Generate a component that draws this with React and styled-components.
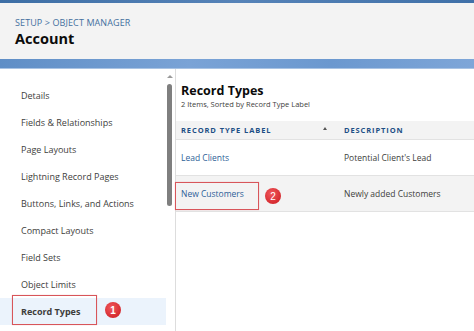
import styled, { createGlobalStyle } from 'styled-components';

const GlobalStyle = createGlobalStyle`
    body {
        margin: 0;
        background: #ffffff;
        font-family: 'Open Sans', 'Noto Sans', sans-serif;
    }
`;

const Page = styled.div`
    width: 474px;
    height: 331px;
    overflow: hidden;
    display: flex;
    flex-direction: column;
    background: #ffffff;
`;

const TopStrip = styled.div`
    height: 3px;
    background: linear-gradient(90deg, #3d6ea5, #5683b8 50%, #3f70a8);
`;

const Header = styled.div`
    height: 56px;
    box-sizing: border-box;
    padding: 13px 15px 0;
    background: #f3f3f3;
`;

const Breadcrumb = styled.div`
    font-size: 9px;
    color: #44709f;
    letter-spacing: 0.1px;
    line-height: 14px;
`;

const Title = styled.div`
    font-size: 14.5px;
    font-weight: 700;
    color: #0b0b0b;
    line-height: 20px;
    margin-top: -1px;
`;

const BlueBand = styled.div`
    height: 9px;
    background: linear-gradient(90deg, #5f8ec6, #7aa3d6 40%, #6b98cf 70%, #7ea6d8);
    border-bottom: 1px solid #a9c3e3;
`;

const Main = styled.div`
    flex: 1;
    display: flex;
`;

const Sidebar = styled.div`
    width: 166px;
    padding-top: 13px;
    display: flex;
    flex-direction: column;
`;

const NavItem = styled.div`
    position: relative;
    height: 27px;
    display: flex;
    align-items: center;
    padding-left: 21px;
    font-size: 9px;
    color: #3e3e3c;
    font-weight: ${p => (p.$active ? 700 : 400)};
    background: ${p => (p.$active ? '#ebf3fc' : 'transparent')};
`;

const ScrollTrack = styled.div`
    width: 9px;
    position: relative;
    border-right: 1px solid #dddddd;
`;

const ScrollArrow = styled.div`
    position: absolute;
    left: 1px;
    top: 6px;
    width: 0;
    height: 0;
    border-left: 3px solid transparent;
    border-right: 3px solid transparent;
    border-bottom: 3px solid #9a9a9a;
`;

const ScrollThumb = styled.div`
    position: absolute;
    left: 1px;
    top: 15px;
    width: 5px;
    height: 122px;
    border-radius: 3px;
    background: #7f7f7f;
`;

const Content = styled.div`
    flex: 1;
    padding-top: 13px;
`;

const Heading = styled.div`
    padding-left: 5px;
    font-size: 12.5px;
    font-weight: 700;
    color: #0b0b0b;
    line-height: 17px;
`;

const Sub = styled.div`
    padding-left: 5px;
    font-size: 7.5px;
    color: #3e3e3c;
    line-height: 11px;
`;

const Table = styled.div`
    margin-top: 11px;
    display: flex;
    flex-direction: column;
`;

const Row = styled.div`
    position: relative;
    display: grid;
    grid-template-columns: 163px 1fr;
    align-items: center;
    height: ${p => (p.$head ? '18px' : '35px')};
    background: ${p => (p.$grey ? '#f3f3f3' : '#ffffff')};
    border-bottom: 1px solid #e2e2e2;
`;

const HeadCell = styled.div`
    position: relative;
    padding-left: 5px;
    font-size: 7.5px;
    font-weight: 700;
    letter-spacing: 0.9px;
    color: #1d4f85;
`;

const SortArrow = styled.div`
    position: absolute;
    right: 12px;
    top: 2px;
    width: 0;
    height: 0;
    border-left: 2px solid transparent;
    border-right: 2px solid transparent;
    border-bottom: 3px solid #555555;
`;

const Cell = styled.div`
    position: relative;
    padding-left: 5px;
    font-size: 8.5px;
    color: ${p => (p.$link ? '#2e5f98' : '#3e3e3c')};
`;

const Callout = styled.div`
    position: absolute;
    left: ${p => p.$left}px;
    top: ${p => p.$top}px;
    width: ${p => p.$w}px;
    height: ${p => p.$h}px;
    box-sizing: border-box;
    border: 1.5px solid #d8555a;
    box-shadow: 0 0 1px rgba(216, 85, 90, 0.4);
`;

const Badge = styled.div`
    position: absolute;
    left: ${p => p.$left}px;
    top: ${p => p.$top}px;
    width: 16px;
    height: 16px;
    border-radius: 50%;
    background: radial-gradient(circle at 40% 35%, #f0585c, #d62b30 70%);
    color: #ffffff;
    font-size: 10px;
    font-family: 'Liberation Sans', Arial, sans-serif;
    display: flex;
    align-items: center;
    justify-content: center;
`;

const navItems = [
    'Details',
    'Fields & Relationships',
    'Page Layouts',
    'Lightning Record Pages',
    'Buttons, Links, and Actions',
    'Compact Layouts',
    'Field Sets',
    'Object Limits',
];

export default function App() {
    return (
        <Page>
            <GlobalStyle />
            <TopStrip />
            <Header>
                <Breadcrumb>SETUP &gt; OBJECT MANAGER</Breadcrumb>
                <Title>Account</Title>
            </Header>
            <BlueBand />
            <Main>
                <Sidebar>
                    {navItems.map(item => (
                        <NavItem key={item}>{item}</NavItem>
                    ))}
                    <NavItem $active>
                        Record Types
                        <Callout $left={12} $top={-3} $w={85} $h={30} />
                        <Badge $left={105} $top={4}>1</Badge>
                    </NavItem>
                </Sidebar>
                <ScrollTrack>
                    <ScrollArrow />
                    <ScrollThumb />
                </ScrollTrack>
                <Content>
                    <Heading>Record Types</Heading>
                    <Sub>2 Items, Sorted by Record Type Label</Sub>
                    <Table>
                        <Row $head $grey>
                            <HeadCell>
                                RECORD TYPE LABEL
                                <SortArrow />
                            </HeadCell>
                            <HeadCell>DESCRIPTION</HeadCell>
                        </Row>
                        <Row>
                            <Cell $link>Lead Clients</Cell>
                            <Cell>Potential Client's Lead</Cell>
                        </Row>
                        <Row $grey>
                            <Cell $link>
                                New Customers
                                <Callout $left={-1} $top={-6} $w={84} $h={28} />
                                <Badge $left={89} $top={0}>2</Badge>
                            </Cell>
                            <Cell>Newly added Customers</Cell>
                        </Row>
                    </Table>
                </Content>
            </Main>
        </Page>
    );
}
